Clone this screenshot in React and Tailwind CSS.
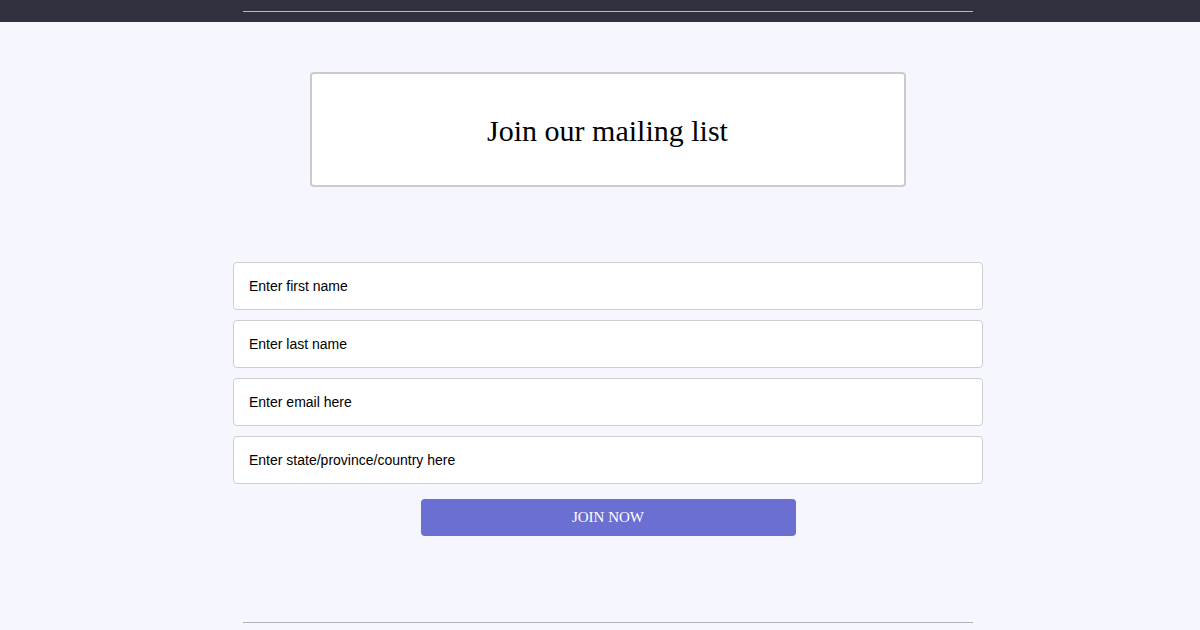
import React, { useState } from 'react';

const fields = [
  { name: 'firstName', placeholder: 'Enter first name' },
  { name: 'lastName', placeholder: 'Enter last name' },
  { name: 'email', placeholder: 'Enter email here' },
  { name: 'region', placeholder: 'Enter state/province/country here' },
];

function App() {
  const [values, setValues] = useState({});

  const handleSubmit = (e) => {
    e.preventDefault();
  };

  return (
    <div className="w-full min-h-screen bg-[#f5f6fe]">
      {/* top strip */}
      <div className="h-[22px] bg-[#2f313f] flex items-center justify-center pl-[16px]">
        <div className="w-[730px] h-px bg-[#b8b9c0]"></div>
      </div>

      <div className="flex flex-col items-center pl-[16px]">
        <div className="mt-[50px] mr-[1px] w-[596px] h-[115px] pt-[2px] bg-white border-2 border-[#cbcbcf] rounded-[4px] flex items-center justify-center">
          <h1 className="text-[30px] leading-[36px] text-black font-['Liberation_Serif',serif]">Join our mailing list</h1>
        </div>

        <form onSubmit={handleSubmit} className="mt-[75px] w-[750px] flex flex-col gap-[10px]">
          {fields.map(f => (
            <input
              key={f.name}
              type="text"
              placeholder={f.placeholder}
              value={values[f.name] || ''}
              onChange={(e) => setValues({ ...values, [f.name]: e.target.value })}
              className="h-[48px] w-full bg-white border border-[#cfcfd2] rounded-[4px] px-[15px] pb-[1px] text-[14px] text-black placeholder:text-black font-['Liberation_Sans',Arial,sans-serif] outline-none"
            />
          ))}
          <button
            type="submit"
            className="self-center mt-[5px] w-[375px] h-[37px] bg-[#6b6fd2] text-white rounded-[4px] text-[15px] font-['Liberation_Serif',serif]"
          >
            JOIN NOW
          </button>
        </form>

        <div className="mt-[86px] w-[730px] h-px bg-[#b0b0b6]"></div>
      </div>
    </div>
  );
}

export default App;
